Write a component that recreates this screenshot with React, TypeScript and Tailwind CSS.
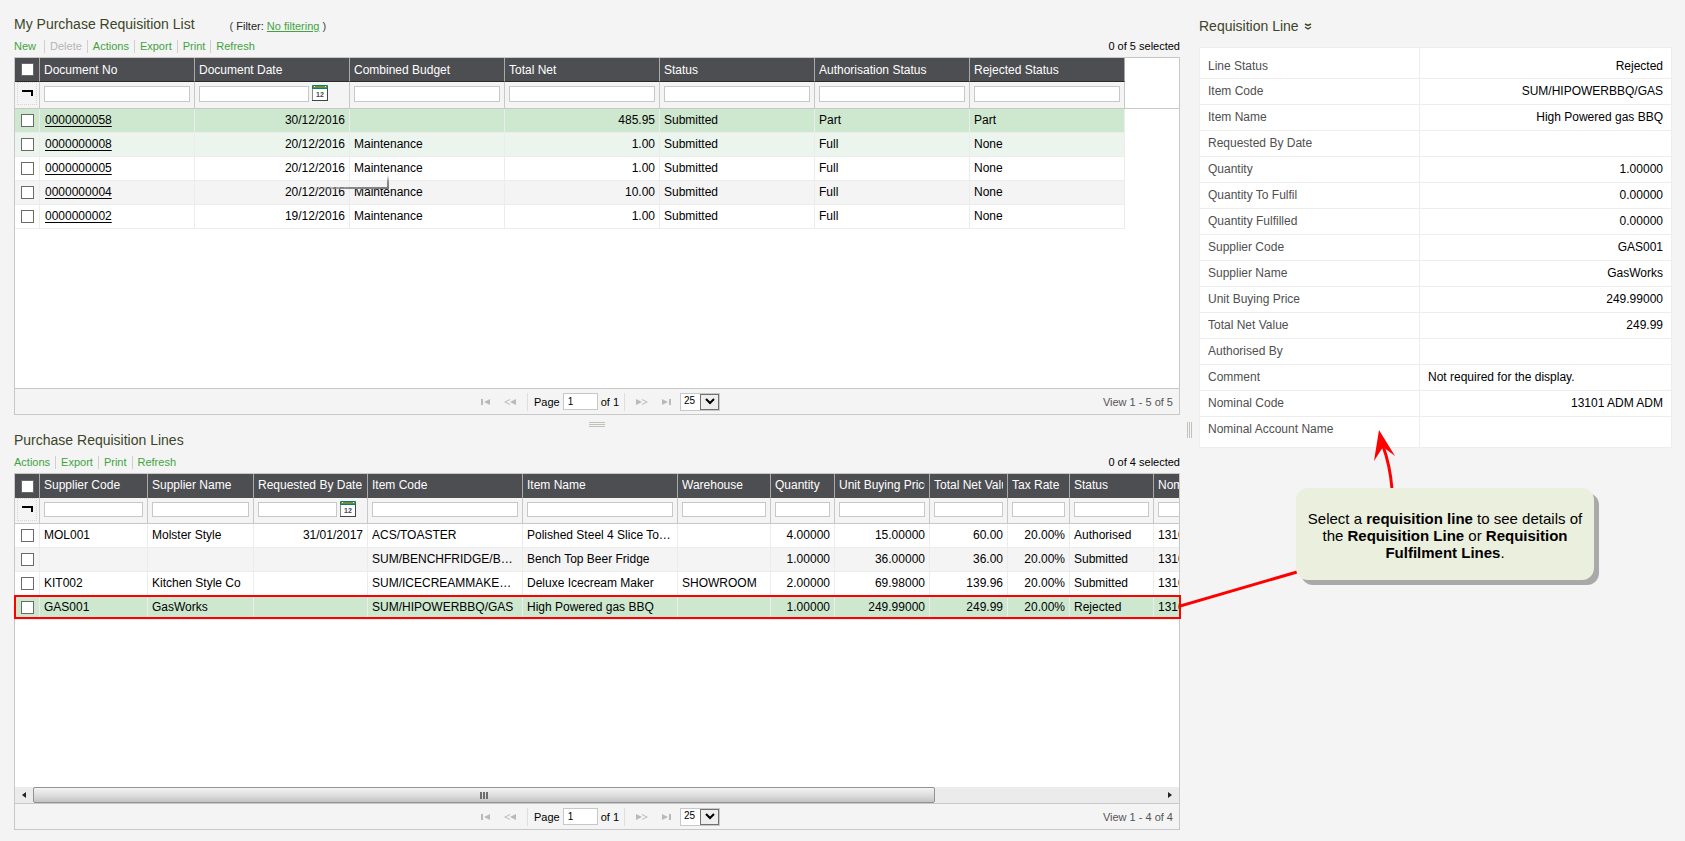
import React, { useId } from 'react';
import { clsx } from 'clsx';

interface Column {
  label: string;
  width: number;
  align?: 'right';
  kind?: 'date' | 'link';
}

interface GridProps {
  name: string;
  columns: Column[];
  rows: string[][];
  rowStyles: string[];
  compact?: boolean;
}

const requisitionColumns: Column[] = [
  { label: 'Document No', width: 155, kind: 'link' },
  { label: 'Document Date', width: 155, align: 'right', kind: 'date' },
  { label: 'Combined Budget', width: 155 },
  { label: 'Total Net', width: 155, align: 'right' },
  { label: 'Status', width: 155 },
  { label: 'Authorisation Status', width: 155 },
  { label: 'Rejected Status', width: 155 },
];

const requisitionRows = [
  ['0000000058', '30/12/2016', '', '485.95', 'Submitted', 'Part', 'Part'],
  ['0000000008', '20/12/2016', 'Maintenance', '1.00', 'Submitted', 'Full', 'None'],
  ['0000000005', '20/12/2016', 'Maintenance', '1.00', 'Submitted', 'Full', 'None'],
  ['0000000004', '20/12/2016', 'Maintenance', '10.00', 'Submitted', 'Full', 'None'],
  ['0000000002', '19/12/2016', 'Maintenance', '1.00', 'Submitted', 'Full', 'None'],
];

const lineColumns: Column[] = [
  { label: 'Supplier Code', width: 108 },
  { label: 'Supplier Name', width: 106 },
  { label: 'Requested By Date', width: 114, align: 'right', kind: 'date' },
  { label: 'Item Code', width: 155 },
  { label: 'Item Name', width: 155 },
  { label: 'Warehouse', width: 93 },
  { label: 'Quantity', width: 64, align: 'right' },
  { label: 'Unit Buying Price', width: 95, align: 'right' },
  { label: 'Total Net Value', width: 78, align: 'right' },
  { label: 'Tax Rate', width: 62, align: 'right' },
  { label: 'Status', width: 84 },
  { label: 'Nominal Code', width: 155 },
];

const lineRows = [
  ['MOL001', 'Molster Style', '31/01/2017', 'ACS/TOASTER', 'Polished Steel 4 Slice Toaster', '', '4.00000', '15.00000', '60.00', '20.00%', 'Authorised', '13101 ADM ADM'],
  ['', '', '', 'SUM/BENCHFRIDGE/BEER', 'Bench Top Beer Fridge', '', '1.00000', '36.00000', '36.00', '20.00%', 'Submitted', '13101 ADM ADM'],
  ['KIT002', 'Kitchen Style Co', '', 'SUM/ICECREAMMAKER/DLX', 'Deluxe Icecream Maker', 'SHOWROOM', '2.00000', '69.98000', '139.96', '20.00%', 'Submitted', '13101 ADM ADM'],
  ['GAS001', 'GasWorks', '', 'SUM/HIPOWERBBQ/GAS', 'High Powered gas BBQ', '', '1.00000', '249.99000', '249.99', '20.00%', 'Rejected', '13101 ADM ADM'],
];

const details = [
  ['Line Status', 'Rejected'],
  ['Item Code', 'SUM/HIPOWERBBQ/GAS'],
  ['Item Name', 'High Powered gas BBQ'],
  ['Requested By Date', ''],
  ['Quantity', '1.00000'],
  ['Quantity To Fulfil', '0.00000'],
  ['Quantity Fulfilled', '0.00000'],
  ['Supplier Code', 'GAS001'],
  ['Supplier Name', 'GasWorks'],
  ['Unit Buying Price', '249.99000'],
  ['Total Net Value', '249.99'],
  ['Authorised By', ''],
  ['Comment', 'Not required for the display.'],
  ['Nominal Code', '13101 ADM ADM'],
  ['Nominal Account Name', ''],
];

const selected = 'bg-[#cee8cf]';
const hovered = 'bg-[#ebf5ed]';
const plain = 'bg-white';
const striped = 'bg-[#f4f4f4]';

function CalendarIcon() {
  return (
    <svg width="16" height="16" viewBox="0 0 16 16" aria-hidden="true">
      <rect x="0" y="1" width="16" height="15" fill="#8a8a8a" />
      <rect x="15" y="3" width="1" height="13" fill="#444" />
      <rect x="0" y="15" width="16" height="1" fill="#444" />
      <rect x="1" y="4" width="14" height="11" fill="#fff" />
      <rect x="0" y="0" width="16" height="4" rx="1" fill="#0e7c68" />
      <rect x="1" y="1" width="14" height="2" fill="#6d8f3c" />
      <rect x="2" y="1" width="1" height="1" fill="#fff" />
      <rect x="13" y="1" width="1" height="1" fill="#fff" />
      <text x="8" y="12" textAnchor="middle" fontSize="7" fontWeight="700" fill="#444">
        12
      </text>
    </svg>
  );
}

function Checkbox({ label }: { label: string }) {
  return (
    <input
      type="checkbox"
      aria-label={label}
      className="block size-[13px] appearance-none border border-[#6a6a6a] bg-white"
    />
  );
}

function Toolbar({ items, status }: { items: string[]; status: string }) {
  return (
    <div className="mt-1 mb-[3px] flex h-4 items-center text-[11px] leading-4">
      {items.map((item, i) => (
        <React.Fragment key={item}>
          {i > 0 && <span className="mx-[5px] h-[13px] w-px bg-[#cfcfcf]" />}
          <button
            disabled={item === 'Delete'}
            className={clsx(
              item === 'Delete' ? 'text-[#b5b5b5]' : 'text-[#3fa33f]',
              item === 'New' && 'pr-[3px]'
            )}
          >
            {item}
          </button>
        </React.Fragment>
      ))}
      <span className="ml-auto text-black">{status}</span>
    </div>
  );
}

function Grid({ name, columns, rows, rowStyles, compact }: GridProps) {
  const total = columns.reduce((sum, c) => sum + c.width, 25);

  return (
    <div className="flex items-start">
      <table
        className="shrink-0 table-fixed border-separate border-spacing-0 text-xs leading-4 text-black"
        style={{ width: total }}
      >
        <colgroup>
          <col className="w-[25px]" />
          {columns.map((c) => (
            <col key={c.label} style={{ width: c.width }} />
          ))}
        </colgroup>
        <thead>
          <tr className="h-6 bg-[#4d4e52] text-left text-white">
            <th
              className={clsx(
                'border-r border-r-[#a9a9a9] p-0 pl-[6px]',
                !compact && 'border-b border-b-[#28292b]'
              )}
            >
              <Checkbox label={`Select all ${name}`} />
            </th>
            {columns.map((c) => (
              <th
                key={c.label}
                className={clsx(
                  'border-r border-r-[#a9a9a9] px-1 py-0 font-normal',
                  compact ? 'pb-[2px]' : 'border-b border-b-[#28292b]'
                )}
              >
                <div className="overflow-hidden whitespace-nowrap">{c.label}</div>
              </th>
            ))}
          </tr>
          <tr className={clsx('bg-[#f4f4f4] align-top', compact ? 'h-[26px]' : 'h-[27px]')}>
            <td className="border-r border-b border-[#c8c8c8] px-[2px] py-0">
              <button
                aria-label={`Clear filter for ${name}`}
                className="flex h-[23px] w-5 items-start border border-dotted border-[#d6d6d6] pt-[7px] pl-1"
              >
                <svg width="11" height="6" viewBox="0 0 11 6" aria-hidden="true">
                  <path d="M0 1h10v5" fill="none" stroke="#000" strokeWidth="2" />
                </svg>
              </button>
            </td>
            {columns.map((c) => (
              <td key={c.label} className="border-r border-b border-[#c8c8c8] px-1 pt-1 pb-0">
                <div className="flex gap-[3px]">
                  <input
                    type="text"
                    aria-label={`Filter ${c.label}`}
                    className={clsx(
                      'block min-w-0 border border-[#c8c8c8] bg-white px-1',
                      compact ? 'h-[15px]' : 'h-4',
                      c.kind === 'date' ? 'w-3/4' : 'w-full'
                    )}
                  />
                  {c.kind === 'date' && (
                    <button aria-label={`Pick ${c.label}`} className="-mt-px block h-4 shrink-0">
                      <CalendarIcon />
                    </button>
                  )}
                </div>
              </td>
            ))}
          </tr>
        </thead>
        <tbody>
          {rows.map((row, r) => (
            <tr key={r} className={clsx('h-6', rowStyles[r])}>
              <td className="border-r border-b border-[#ececec] p-0 pl-[6px]">
                <Checkbox label={`Select row ${r + 1}`} />
              </td>
              {row.map((cell, i) => (
                <td
                  key={i}
                  className={clsx(
                    'truncate border-r border-b border-[#ececec] px-1 pt-[3px] pb-1',
                    columns[i].align === 'right' && 'text-right'
                  )}
                >
                  {columns[i].kind === 'link' ? (
                    <a href="#" className="pl-px underline underline-offset-2">
                      {cell}
                    </a>
                  ) : (
                    cell
                  )}
                </td>
              ))}
            </tr>
          ))}
        </tbody>
      </table>
      <div className="h-[51px] min-w-0 flex-1 border-b border-[#c8c8c8]" />
    </div>
  );
}

function PagerButton({ label, d }: { label: string; d: string }) {
  return (
    <button aria-label={label} className="flex w-6 justify-center">
      <svg width="12" height="6" viewBox="0 0 12 6" fill="#b9b9b9" aria-hidden="true">
        <path d={d} />
      </svg>
    </button>
  );
}

function Pager({ summary }: { summary: string }) {
  const id = useId();

  return (
    <div className="grid h-[26px] shrink-0 grid-cols-[1fr_auto_1fr] items-center border-t border-[#c8c8c8] bg-[#f4f4f4] text-[11px] leading-4 text-black">
      <span />
      <div className="flex items-center">
        <PagerButton label="First page" d="M1 0h2v6H1zM10 0v6L4 3z" />
        <PagerButton label="Previous page" d="M12 0v6L6 3zM6 0v1L2 3l4 2v1L0 3z" />
        <span className="mx-[5px] h-[18px] w-px bg-[#dedede]" />
        <label htmlFor={`${id}-page`} className="ml-px">
          Page
        </label>
        <input
          id={`${id}-page`}
          type="text"
          defaultValue="1"
          className="mx-[3px] h-[17px] w-[35px] border border-[#c8c8c8] bg-white px-1 text-[10px]"
        />
        <span>of 1</span>
        <span className="mx-[5px] h-[18px] w-px bg-[#dedede]" />
        <PagerButton label="Next page" d="M0 0v6l6-3zM6 0v1l4 2-4 2v1l6-3z" />
        <PagerButton label="Last page" d="M2 0v6l6-3zM9 0h2v6H9z" />
        <div className="relative ml-[2px] h-[18px] w-10">
          <select
            aria-label="Rows per page"
            className="block size-full appearance-none border border-[#c8c8c8] bg-white pb-[2px] pl-[3px] text-[10px] leading-3"
          >
            <option>25</option>
          </select>
          <span className="pointer-events-none absolute top-px right-px flex h-4 w-[19px] items-center justify-center border border-[#707070] bg-[#eeeeee]">
            <svg width="10" height="7" viewBox="0 0 10 7" aria-hidden="true">
              <path d="M1 1l4 4 4-4" fill="none" stroke="#000" strokeWidth="2" />
            </svg>
          </span>
        </div>
      </div>
      <span className="pr-[6px] text-right text-[#555]">{summary}</span>
    </div>
  );
}

function Scrollbar() {
  return (
    <div className="flex h-4 shrink-0 bg-[#ebebeb]">
      <button aria-label="Scroll left" className="flex w-[18px] items-center justify-center">
        <svg width="4" height="6" viewBox="0 0 4 6" aria-hidden="true">
          <path d="M4 0v6L0 3z" fill="#222" />
        </svg>
      </button>
      <div className="flex-1">
        <div className="flex h-4 w-4/5 items-center justify-center gap-px rounded-[2px] border border-[#939393] bg-linear-to-b from-[#f4f4f4] via-[#dedede] to-[#c3c3c3]">
          <span className="h-[7px] w-[2px] bg-[#6d6d6d]" />
          <span className="h-[7px] w-[2px] bg-[#6d6d6d]" />
          <span className="h-[7px] w-[2px] bg-[#6d6d6d]" />
        </div>
      </div>
      <button aria-label="Scroll right" className="flex w-[18px] items-center justify-center">
        <svg width="4" height="6" viewBox="0 0 4 6" aria-hidden="true">
          <path d="M0 0v6l4-3z" fill="#222" />
        </svg>
      </button>
    </div>
  );
}

function Callout() {
  return (
    <>
      {/* connector from the highlighted row, and the arrow up to the details */}
      <svg
        className="pointer-events-none absolute top-[428px] -left-[19px]"
        width="220"
        height="182"
        viewBox="0 0 220 182"
        aria-hidden="true"
      >
        <path d="M0 178L117 144" stroke="#fe0000" strokeWidth="3" fill="none" />
        <path d="M212 61Q210 37 203 18" stroke="#fe0000" strokeWidth="3" fill="none" />
        <path d="M199 2L194 33L203 19L215 28Z" fill="#fe0000" />
      </svg>
      <div className="absolute top-[488px] left-[97px] h-[92px] w-[298px] rounded-xl bg-[#ebefde] px-2 pt-[22px] text-center text-[15px] leading-[17px] text-black shadow-[5px_5px_0_#a9a9a9]">
        Select a <b>requisition line</b> to see details of the <b>Requisition Line</b> or{' '}
        <b>Requisition Fulfilment Lines</b>.
      </div>
    </>
  );
}

export default function App() {
  return (
    <div className="flex min-h-screen bg-[#f4f4f4] pr-[13px] pl-[14px] font-['Liberation_Sans',Arial,sans-serif]">
      <main className="flex min-w-0 flex-1 flex-col pt-[14px] pb-[11px]">
        <section>
          <div className="flex items-end gap-[35px]">
            <h2 className="text-sm leading-5 text-[#3d4428]">My Purchase Requisition List</h2>
            <p className="text-[11px] leading-4 text-[#444]">
              ( <span className="text-[#222]">Filter:</span>{' '}
              <a href="#" className="text-[#3fa33f] underline underline-offset-1">
                No filtering
              </a>{' '}
              )
            </p>
          </div>
          <Toolbar
            items={['New', 'Delete', 'Actions', 'Export', 'Print', 'Refresh']}
            status="0 of 5 selected"
          />
          <div className="relative border border-[#c8c8c8] bg-white">
            <div className="h-[330px] overflow-hidden">
              <Grid
                name="requisitions"
                columns={requisitionColumns}
                rows={requisitionRows}
                rowStyles={[selected, hovered, plain, striped, plain]}
              />
            </div>
            <Pager summary="View 1 - 5 of 5" />
            {/* corner of a tooltip fading out over the rows */}
            <div className="pointer-events-none absolute top-[117px] left-[294px] h-[14px] w-20">
              <div className="absolute bottom-0 left-0 h-[2px] w-full bg-linear-to-r from-transparent via-[#8a8a8a] to-[#7d7d7d]" />
              <div className="absolute right-0 bottom-0 h-full w-[2px] bg-linear-to-b from-transparent via-[#8a8a8a] to-[#7d7d7d]" />
            </div>
          </div>
        </section>

        <div className="flex h-[15px] flex-col items-center gap-px pt-[7px]">
          <span className="h-px w-4 bg-[#bfc3b5]" />
          <span className="h-px w-4 bg-[#bfc3b5]" />
          <span className="h-px w-4 bg-[#bfc3b5]" />
        </div>

        <section className="flex flex-1 flex-col">
          <h2 className="text-sm leading-5 text-[#3d4428]">Purchase Requisition Lines</h2>
          <Toolbar items={['Actions', 'Export', 'Print', 'Refresh']} status="0 of 4 selected" />
          <div className="relative flex flex-1 flex-col border border-[#c8c8c8] bg-white">
            <div className="flex-1 overflow-hidden">
              <Grid
                name="requisition lines"
                columns={lineColumns}
                rows={lineRows}
                rowStyles={[plain, striped, plain, selected]}
                compact
              />
            </div>
            <Scrollbar />
            <Pager summary="View 1 - 4 of 4" />
            <div className="pointer-events-none absolute top-[121px] -right-[2px] -left-px h-6 border-2 border-[#fe0000]" />
          </div>
        </section>
      </main>

      <div className="flex w-[19px] items-center justify-center gap-px pt-[18px]">
        <span className="h-4 w-px bg-[#c2c2b8]" />
        <span className="h-4 w-px bg-[#c2c2b8]" />
        <span className="h-4 w-px bg-[#c2c2b8]" />
      </div>

      <aside className="relative w-[473px] shrink-0 pt-4">
        <h2 className="flex items-center gap-[5px] text-sm leading-5 text-[#3d4428]">
          Requisition Line
          <svg width="8" height="7" viewBox="0 0 8 7" aria-hidden="true">
            <path d="M1 1l3 1.5L7 1M1 4l3 2 3-2" fill="none" stroke="#3d4428" strokeWidth="1.4" />
          </svg>
        </h2>
        <table className="mt-[11px] w-full table-fixed border-separate border-spacing-0 border-t border-l border-[#ededed] bg-white text-xs leading-4">
          <tbody>
            {details.map(([label, value], i) => {
              const first = i === 0;
              const last = i === details.length - 1;
              const edge = first ? 'pt-[5px] pb-0' : last ? 'pt-0 pb-[6px]' : 'pt-0 pb-px';
              return (
                <tr key={label} className={first || last ? 'h-[31px]' : 'h-[26px]'}>
                  <th
                    scope="row"
                    className={clsx(
                      'w-[220px] border-r border-b border-[#ededed] px-2 text-left font-normal text-[#4f4f4f]',
                      edge
                    )}
                  >
                    {label}
                  </th>
                  <td
                    className={clsx(
                      'border-r border-b border-[#ededed] px-2 text-black',
                      label === 'Comment' ? 'text-left' : 'text-right',
                      edge
                    )}
                  >
                    {value}
                  </td>
                </tr>
              );
            })}
          </tbody>
        </table>
        <Callout />
      </aside>
    </div>
  );
}
